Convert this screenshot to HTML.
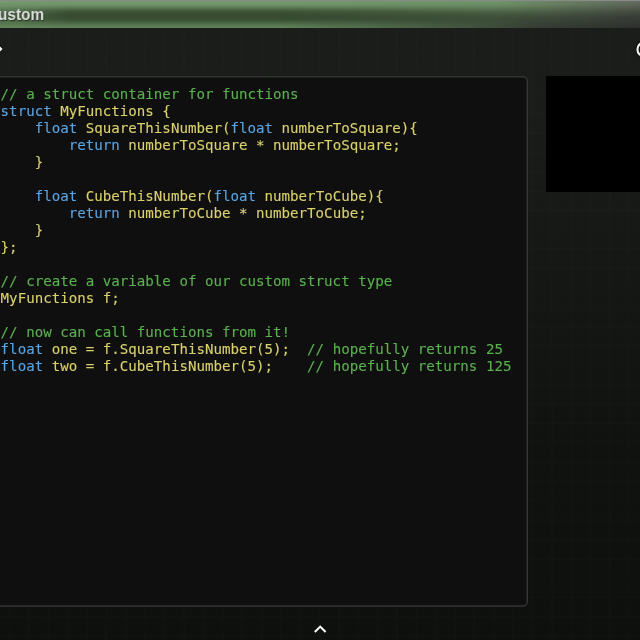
<!DOCTYPE html>
<html><head><meta charset="utf-8">
<style>
html,body{margin:0;padding:0;}
body{width:640px;height:640px;overflow:hidden;position:relative;background:#141614;font-family:"Liberation Sans",sans-serif;}
.abs{position:absolute;}
#bg{left:0;top:0;width:640px;height:640px;background:linear-gradient(to bottom,#1b1d1b 28px,#1a1c1a 120px,#161816 250px,#101210 450px,#0e100e 640px);}
#grid{left:0;top:0;width:640px;height:640px;
 background-image:linear-gradient(to right,rgba(255,255,255,0.004) 0,rgba(255,255,255,0.011) 1px,rgba(255,255,255,0.004) 2px,transparent 2px);
 background-size:19.37px 19.37px;background-position:8.8px 15.8px;}
#gridh{left:0;top:76px;width:640px;height:564px;
 background-image:linear-gradient(to bottom,rgba(255,255,255,0.004) 0,rgba(255,255,255,0.011) 1px,rgba(255,255,255,0.004) 2px,transparent 2px);
 background-size:19.37px 19.37px;background-position:8.8px -60.2px;}
#hdr{left:0;top:0;width:640px;height:28px;overflow:hidden;background:linear-gradient(to bottom,#76996f 1px,#6f9269 5px,#587651 8px,#40573a 11px,#364a30 15px,#384d32 19px,#44603f 22px,#55764f 25px,#628559 28px);}
#hdrL{left:0;top:0;width:90px;height:28px;background:linear-gradient(to bottom,#76996f 1px,#6d9067 6px,#557450 11px,#4c6846 15px,#4d6a47 19px,#55764f 23px,#628559 28px);-webkit-mask-image:linear-gradient(to right,#000 0,#000 5px,transparent 70px);mask-image:linear-gradient(to right,#000 0,#000 5px,transparent 70px);}
#hdrR{left:0;top:0;width:640px;height:28px;background:linear-gradient(to bottom,#70926a 1px,#6a8b63 5px,#5b7654 9px,#4a5f45 13px,#3f4f3b 18px,#363f34 28px);-webkit-mask-image:linear-gradient(to right,transparent 280px,#000 545px);mask-image:linear-gradient(to right,transparent 280px,#000 545px);}
#hdrG{left:0;top:0;width:640px;height:28px;background:linear-gradient(to bottom,#62655f 1px,#545750 6px,#444741 11px,#363836 17px,#2c2e2c 28px);-webkit-mask-image:linear-gradient(to right,transparent 500px,#000 670px);mask-image:linear-gradient(to right,transparent 500px,#000 670px);}
#hdrtop{left:0;top:0;width:640px;height:1px;background:#8a8a8a;}
#title{will-change:transform;left:-12.8px;top:5.6px;font-weight:bold;font-size:16.8px;line-height:18px;color:#dedede;white-space:nowrap;transform-origin:0 0;transform:scaleX(0.915);text-shadow:0.8px 0.8px 1px rgba(0,0,0,0.55);}
#black{left:545.6px;top:76px;width:100px;height:116px;background:#000;}
pre{margin:0;left:0px;top:85px;transform:translate(0.6px,0.5px);-webkit-text-stroke:0.12px;will-change:transform;font-family:"DejaVu Sans Mono","Liberation Mono",monospace;font-size:14.155px;line-height:17px;color:#d9d06c;white-space:pre;}
.c{color:#5bb050;}
.k{color:#59a4e2;}
</style></head><body>
<div id="bg" class="abs"></div>
<div id="grid" class="abs"></div>
<div id="gridh" class="abs"></div>
<div id="hdr" class="abs"></div>
<div id="hdrL" class="abs"></div>
<div id="hdrR" class="abs"></div>
<div id="hdrG" class="abs"></div>
<div id="hdrtop" class="abs"></div>
<div id="title" class="abs">Custom</div>
<svg class="abs" style="left:0;top:0" width="640" height="640" viewBox="0 0 640 640"><rect x="-20" y="76.75" width="547.25" height="529.25" rx="4.5" ry="4.5" fill="#0f0f0f" stroke="#343434" stroke-width="1.5"/></svg>
<div id="black" class="abs"></div>
<pre class="abs"><span class="c">// a struct container for functions</span>
<span class="k">struct</span> MyFunctions {
    <span class="k">float</span> SquareThisNumber(<span class="k">float</span> numberToSquare){
        <span class="k">return</span> numberToSquare * numberToSquare;
    }

    <span class="k">float</span> CubeThisNumber(<span class="k">float</span> numberToCube){
        <span class="k">return</span> numberToCube * numberToCube;
    }
};

<span class="c">// create a variable of our custom struct type</span>
MyFunctions f;

<span class="c">// now can call functions from it!</span>
<span class="k">float</span> one = f.SquareThisNumber(5);  <span class="c">// hopefully returns 25</span>
<span class="k">float</span> two = f.CubeThisNumber(5);    <span class="c">// hopefully returns 125</span></pre>
<svg class="abs" style="left:308.4px;top:616.75px;overflow:visible" width="24.4" height="24.4" viewBox="0 0 24 24"><path d="M12 8l-6 6 1.41 1.41L12 10.83l4.59 4.58L18 14z" fill="#fff"/></svg>
<svg class="abs" style="left:0;top:38.3px;overflow:visible;filter:drop-shadow(0 0 1px #000)" width="8" height="22" viewBox="0 0 8 22"><path d="M-4 4.5 L2.6 11 L-4 17.5 Z" fill="#fff"/></svg>
<svg class="abs" style="left:628px;top:38px;overflow:visible;filter:drop-shadow(0 0 1px #000)" width="12" height="24" viewBox="0 0 12 24"><circle cx="16.8" cy="11.4" r="7.35" fill="none" stroke="#f4f4f4" stroke-width="2.1"/></svg>
</body></html>
